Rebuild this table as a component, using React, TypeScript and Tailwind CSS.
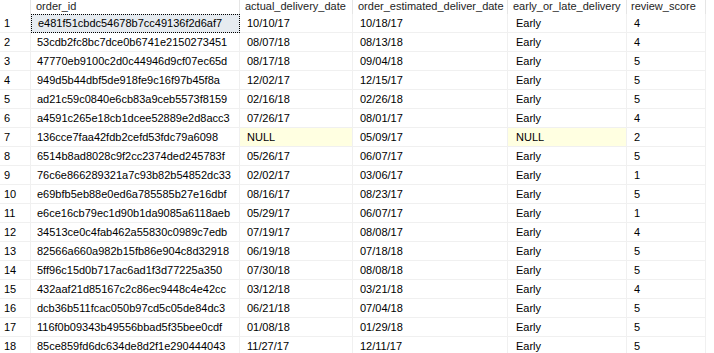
import React from "react";

const columns = [
  { key: "order_id", width: "w-[209px]", head: "pl-[5px]", cell: "pl-[6px]" },
  { key: "actual_delivery_date", width: "w-[113px]", head: "pl-[5px]", cell: "pl-[7px]" },
  { key: "order_estimated_deliver_date", width: "w-[155px]", head: "pl-[5px]", cell: "pl-[7px]" },
  { key: "early_or_late_delivery", width: "w-[119px]", head: "pl-[5px]", cell: "pl-[8px]" },
  { key: "review_score", width: "w-[79px]", head: "pl-[4px]", cell: "pl-[7px]" },
];

const rows: (string | null)[][] = [
  ["e481f51cbdc54678b7cc49136f2d6af7", "10/10/17", "10/18/17", "Early", "4"],
  ["53cdb2fc8bc7dce0b6741e2150273451", "08/07/18", "08/13/18", "Early", "4"],
  ["47770eb9100c2d0c44946d9cf07ec65d", "08/17/18", "09/04/18", "Early", "5"],
  ["949d5b44dbf5de918fe9c16f97b45f8a", "12/02/17", "12/15/17", "Early", "5"],
  ["ad21c59c0840e6cb83a9ceb5573f8159", "02/16/18", "02/26/18", "Early", "5"],
  ["a4591c265e18cb1dcee52889e2d8acc3", "07/26/17", "08/01/17", "Early", "4"],
  ["136cce7faa42fdb2cefd53fdc79a6098", null, "05/09/17", null, "2"],
  ["6514b8ad8028c9f2cc2374ded245783f", "05/26/17", "06/07/17", "Early", "5"],
  ["76c6e866289321a7c93b82b54852dc33", "02/02/17", "03/06/17", "Early", "1"],
  ["e69bfb5eb88e0ed6a785585b27e16dbf", "08/16/17", "08/23/17", "Early", "5"],
  ["e6ce16cb79ec1d90b1da9085a6118aeb", "05/29/17", "06/07/17", "Early", "1"],
  ["34513ce0c4fab462a55830c0989c7edb", "07/19/17", "08/08/17", "Early", "4"],
  ["82566a660a982b15fb86e904c8d32918", "06/19/18", "07/18/18", "Early", "5"],
  ["5ff96c15d0b717ac6ad1f3d77225a350", "07/30/18", "08/08/18", "Early", "5"],
  ["432aaf21d85167c2c86ec9448c4e42cc", "03/12/18", "03/21/18", "Early", "4"],
  ["dcb36b511fcac050b97cd5c05de84dc3", "06/21/18", "07/04/18", "Early", "5"],
  ["116f0b09343b49556bbad5f35bee0cdf", "01/08/18", "01/29/18", "Early", "5"],
  ["85ce859fd6dc634de8d2f1e290444043", "11/27/17", "12/11/17", "Early", "5"],
];

export default function App() {
  return (
    <div className="w-[714px] h-[353px] overflow-hidden bg-white text-[11px] text-black font-['Liberation_Sans',Arial,sans-serif]">
      {/* Header */}
      <div className="flex h-[14px] leading-[13px]">
        <div className="w-[31px] shrink-0 border-r border-[#e5e5e5]" />
        {columns.map((c) => (
          <div
            key={c.key}
            className={`${c.width} ${c.head} shrink-0 border-r border-[#e5e5e5] text-[#1e1e1e] whitespace-nowrap overflow-hidden`}
          >
            {c.key}
          </div>
        ))}
      </div>

      {/* Rows */}
      {rows.map((r, i) => (
        <div key={i} className="flex h-[19px] leading-[18px]">
          <div className="w-[31px] shrink-0 pl-[4px] border-r border-b border-[#f0f0f0]">
            {i + 1}
          </div>
          {columns.map((c, j) => {
            const v = r[j];
            const selected = i === 0 && j === 0;
            return (
              <div
                key={c.key}
                className={`${c.width} ${c.cell} shrink-0 whitespace-nowrap overflow-hidden ${
                  selected
                    ? "bg-[#e6ebf0] border border-dotted border-black pl-[5px] leading-[17px]"
                    : v === null
                    ? "bg-[#ffffe1] border-r border-b border-[#f0f0f0]"
                    : "border-r border-b border-[#f0f0f0]"
                }`}
              >
                {v === null ? "NULL" : v}
              </div>
            );
          })}
        </div>
      ))}
    </div>
  );
}
